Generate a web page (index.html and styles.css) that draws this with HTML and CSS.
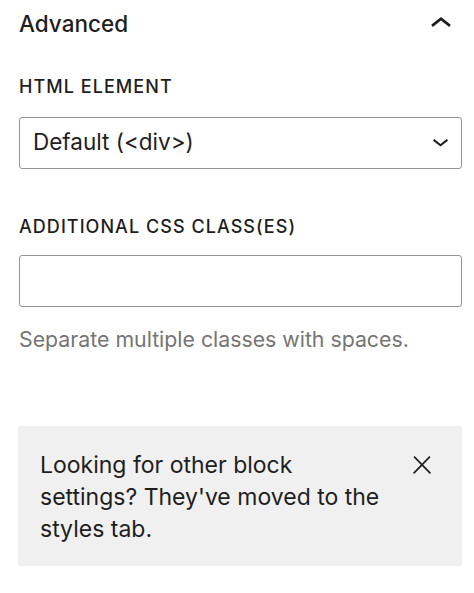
FILE: index.html
```html
<!DOCTYPE html>
<html lang="en">
<head>
<meta charset="utf-8">
<title>Advanced</title>
<link rel="stylesheet" href="styles.css">
</head>
<body>
<div class="panel">
  <div class="panel-header">
    <h2 class="panel-title">Advanced</h2>
    <svg class="chevron-up" viewBox="6.5 8 11 5.6" width="20" height="10" aria-hidden="true"><path d="M6.5 12.4L12 8l5.5 4.4-.9 1.2L12 10l-4.6 3.6-.9-1.2z" fill="#1e1e1e"/></svg>
  </div>

  <div class="field-label label-first">HTML ELEMENT</div>
  <div class="select">
    <span class="select-value">Default (&lt;div&gt;)</span>
    <svg class="chevron-down" viewBox="6.5 10.4 11 5.6" width="15" height="7.6" aria-hidden="true"><path d="M17.5 11.6L12 16l-5.5-4.4.9-1.2L12 14l4.6-3.6 1 1.2z" fill="#1e1e1e"/></svg>
  </div>

  <div class="field-label label-second">ADDITIONAL CSS CLASS(ES)</div>
  <input class="text-input" type="text" aria-label="Additional CSS class(es)">
  <p class="help">Separate multiple classes with spaces.</p>

  <div class="notice">
    <p class="notice-text">Looking for other block settings? They've moved to the styles tab.</p>
    <span class="notice-close" aria-label="Close">
      <svg viewBox="4.5 4.5 15 15" width="18" height="18" aria-hidden="true"><path d="M13 11.8l6.1-6.3-1-1-6.1 6.2-6.1-6.2-1 1 6.1 6.3-6.5 6.7 1 1 6.5-6.6 6.5 6.6 1-1z" fill="#1e1e1e"/></svg>
    </span>
  </div>
</div>
</body>
</html>
```

FILE: styles.css
```css
* { box-sizing: border-box; }

html, body {
  margin: 0;
  padding: 0;
  background: #ffffff;
}

body {
  font-family: Inter, "Noto Sans", "Liberation Sans", sans-serif;
  color: #1e1e1e;
}

.panel {
  display: flex;
  flex-direction: column;
  padding: 9px 12px 0 19px;
}

.panel-header {
  display: flex;
  align-items: center;
  justify-content: space-between;
  height: 30px;
  padding-right: 11px;
}

.panel-title {
  margin: 0;
  font-size: 22.5px;
  line-height: 30px;
  font-weight: 500;
}

.chevron-up {
  display: block;
  margin-bottom: 4px;
}

.field-label {
  font-size: 18px;
  line-height: 24px;
  font-weight: 500;
  letter-spacing: 1.05px;
  text-transform: uppercase;
}

.label-first { margin-top: 36px; }
.label-second { margin-top: 46px; }

.select {
  margin-top: 18px;
  height: 52px;
  border: 1px solid #949494;
  border-radius: 3px;
  display: flex;
  align-items: center;
  justify-content: space-between;
  padding: 0 13px 2px 13px;
}

.select-value {
  font-size: 22.5px;
  line-height: 26px;
}

.chevron-down {
  display: block;
  margin-top: 2px;
}

.text-input {
  margin-top: 16px;
  height: 52px;
  width: 100%;
  border: 1px solid #949494;
  border-radius: 3px;
  background: #ffffff;
  font: inherit;
  padding: 0 14px;
}

.help {
  margin: 18px 0 0;
  font-size: 21.3px;
  line-height: 28px;
  color: #757575;
}

.notice {
  margin-top: 73px;
  margin-left: -1px;
  background: #f0f0f0;
  border-radius: 2px;
  display: flex;
  align-items: flex-start;
  gap: 22px;
  padding: 23px 28px 21px 22px;
}

.notice-text {
  flex: 1;
  margin: 0;
  font-size: 23px;
  line-height: 32px;
}

.notice-close {
  flex: none;
  width: 24px;
  height: 24px;
  margin-top: 4px;
  display: flex;
  align-items: center;
  justify-content: center;
}

.notice-close svg { display: block; }
```
